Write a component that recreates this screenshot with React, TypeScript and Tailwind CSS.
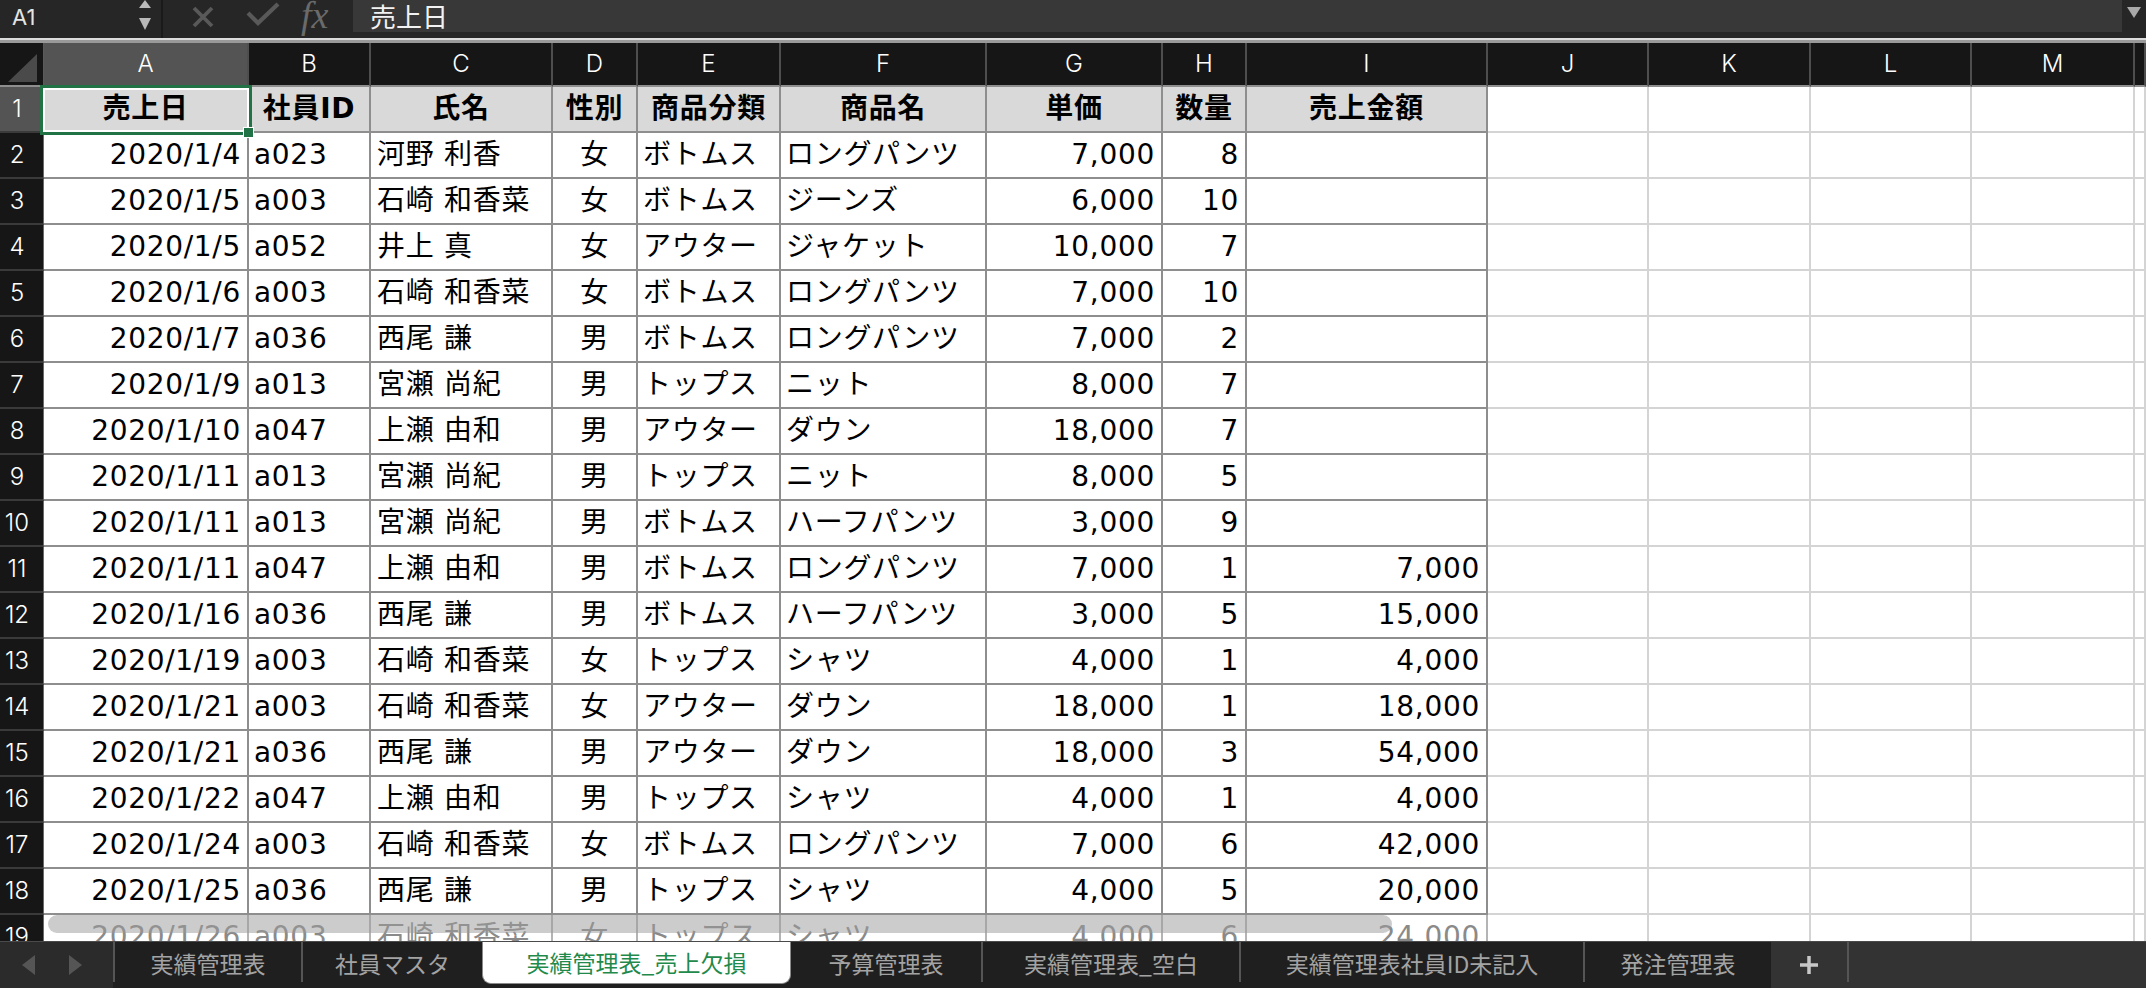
import React from "react";

const COLS =
  "grid grid-cols-[44px_205px_122px_182px_85px_143px_206px_176px_84px_241px_161px_162px_161px_163px_1fr]";

const LETTERS = ["A", "B", "C", "D", "E", "F", "G", "H", "I", "J", "K", "L", "M", ""];

const HEAD = ["売上日", "社員ID", "氏名", "性別", "商品分類", "商品名", "単価", "数量", "売上金額"];

const DATA: string[][] = [
  ["2020/1/4", "a023", "河野 利香", "女", "ボトムス", "ロングパンツ", "7,000", "8", ""],
  ["2020/1/5", "a003", "石崎 和香菜", "女", "ボトムス", "ジーンズ", "6,000", "10", ""],
  ["2020/1/5", "a052", "井上 真", "女", "アウター", "ジャケット", "10,000", "7", ""],
  ["2020/1/6", "a003", "石崎 和香菜", "女", "ボトムス", "ロングパンツ", "7,000", "10", ""],
  ["2020/1/7", "a036", "西尾 謙", "男", "ボトムス", "ロングパンツ", "7,000", "2", ""],
  ["2020/1/9", "a013", "宮瀬 尚紀", "男", "トップス", "ニット", "8,000", "7", ""],
  ["2020/1/10", "a047", "上瀬 由和", "男", "アウター", "ダウン", "18,000", "7", ""],
  ["2020/1/11", "a013", "宮瀬 尚紀", "男", "トップス", "ニット", "8,000", "5", ""],
  ["2020/1/11", "a013", "宮瀬 尚紀", "男", "ボトムス", "ハーフパンツ", "3,000", "9", ""],
  ["2020/1/11", "a047", "上瀬 由和", "男", "ボトムス", "ロングパンツ", "7,000", "1", "7,000"],
  ["2020/1/16", "a036", "西尾 謙", "男", "ボトムス", "ハーフパンツ", "3,000", "5", "15,000"],
  ["2020/1/19", "a003", "石崎 和香菜", "女", "トップス", "シャツ", "4,000", "1", "4,000"],
  ["2020/1/21", "a003", "石崎 和香菜", "女", "アウター", "ダウン", "18,000", "1", "18,000"],
  ["2020/1/21", "a036", "西尾 謙", "男", "アウター", "ダウン", "18,000", "3", "54,000"],
  ["2020/1/22", "a047", "上瀬 由和", "男", "トップス", "シャツ", "4,000", "1", "4,000"],
  ["2020/1/24", "a003", "石崎 和香菜", "女", "ボトムス", "ロングパンツ", "7,000", "6", "42,000"],
  ["2020/1/25", "a036", "西尾 謙", "男", "トップス", "シャツ", "4,000", "5", "20,000"],
  ["2020/1/26", "a003", "石崎 和香菜", "女", "トップス", "シャツ", "4,000", "6", "24,000"],
];

const ALIGN = [
  "justify-end pr-[6px]",
  "justify-start pl-[5px]",
  "justify-start pl-[6px]",
  "justify-center",
  "justify-start pl-[5px]",
  "justify-start pl-[5px]",
  "justify-end pr-[6px]",
  "justify-end pr-[6px]",
  "justify-end pr-[6px]",
];

const CELL_FONT =
  "font-['DejaVu_Sans','Noto_Sans_CJK_JP',sans-serif] text-[28px] leading-none tracking-[0.7px]";
const HEAD_FONT = "font-['Inter','Noto_Sans',sans-serif] font-light text-[24px] leading-none text-white";

function FormulaBar() {
  return (
    <div className="flex h-[38px] bg-[#262626]">
      <div className="flex w-[161px] items-start justify-between">
        <span className="pl-[12px] pt-[6px] font-['Inter','Noto_Sans',sans-serif] text-[22px] leading-none text-[#e4e4e4]">
          A1
        </span>
        <svg width="14" height="31" viewBox="0 0 14 31" className="mr-[9px]">
          <polygon points="1,8 13,8 7,0" fill="#b9b9b9" />
          <polygon points="1,18 13,18 7,30" fill="#b9b9b9" />
        </svg>
      </div>
      <div className="w-[2px] bg-[#1a1a1a]" />
      <div className="relative flex w-[190px] items-start">
        <svg width="24" height="24" viewBox="0 0 24 24" className="ml-[28px] mt-[5px]">
          <path d="M3 3 L21 21 M21 3 L3 21" stroke="#595959" strokeWidth="3.8" strokeLinecap="butt" />
        </svg>
        <svg width="36" height="26" viewBox="0 0 36 26" className="ml-[30px] mt-[1px]">
          <path d="M3 12 L13 22 L33 3" stroke="#595959" strokeWidth="4.2" fill="none" />
        </svg>
        <span className="ml-[20px] mt-[-5px] font-['Liberation_Serif',serif] text-[38px] italic leading-[40px] text-[#6a6a6a]">
          fx
        </span>
      </div>
      <div className="flex h-[32px] flex-1 items-center bg-[#383838] pl-[17px]">
        <span className="font-['Noto_Sans_CJK_JP',sans-serif] text-[26px] leading-[30px] text-[#f2f2f2]">売上日</span>
      </div>
      <div className="flex w-[24px] justify-center pt-[7px]">
        <svg width="14" height="12" viewBox="0 0 14 12">
          <polygon points="0,0 14,0 7,11" fill="#a9a9a9" />
        </svg>
      </div>
    </div>
  );
}

function ColumnHeader() {
  return (
    <div className={`${COLS} h-[44px] bg-[#161616]`}>
      <div className="relative border-r-[1px] border-b-2 border-r-[#5a5a5a] border-b-[#8e8e8e]">
        <svg width="44" height="42" viewBox="0 0 44 42" className="absolute left-0 top-0">
          <polygon points="8,39 37,39 37,11" fill="#4a4a4a" />
        </svg>
      </div>
      {LETTERS.map((l, i) => (
        <div
          key={i}
          className={`flex items-center justify-center border-r-2 border-b-2 border-r-[#4e4e4e] border-b-[#8e8e8e] ${HEAD_FONT} ${
            i === 0 ? "bg-[#545454]" : ""
          }`}
        >
          {l}
        </div>
      ))}
    </div>
  );
}

function RowHeaderCell({ n }: { n: number }) {
  return (
    <div
      className={`flex items-center justify-center pr-[9px] border-r-[1px] border-b-2 border-r-[#6a6a6a] border-b-[#3a3a3a] ${HEAD_FONT} ${
        n === 1 ? "bg-[#545454]" : "bg-[#161616]"
      }`}
    >
      {n}
    </div>
  );
}

function EmptyCells() {
  return (
    <>
      {[0, 1, 2, 3, 4].map((k) => (
        <div key={k} className="border-r-2 border-b-2 border-[#d4d4d4] bg-white" />
      ))}
    </>
  );
}

function HeaderRow() {
  return (
    <div className={`${COLS} h-[46px]`}>
      <RowHeaderCell n={1} />
      {HEAD.map((h, i) => (
        <div
          key={i}
          className={`flex items-center justify-center border-r-2 border-b-2 border-[#8e8e8e] bg-[#d9d9d9] font-bold text-black ${CELL_FONT}`}
        >
          {h}
        </div>
      ))}
      <EmptyCells />
    </div>
  );
}

function DataRow({ n, row, faded }: { n: number; row: string[]; faded?: boolean }) {
  return (
    <div className={`${COLS} h-[46px]`}>
      <RowHeaderCell n={n} />
      {row.map((c, i) => (
        <div
          key={i}
          className={`flex items-center whitespace-nowrap border-r-2 border-b-2 bg-white ${CELL_FONT} ${ALIGN[i]} ${
            faded ? "border-[#b4b4b4] text-[#8a8a8a]" : "border-[#8e8e8e] text-black"
          }`}
        >
          {c}
        </div>
      ))}
      <EmptyCells />
    </div>
  );
}

function Sheet() {
  return (
    <div className="relative h-[898px] overflow-hidden bg-white">
      <ColumnHeader />
      <HeaderRow />
      {DATA.map((r, i) => (
        <DataRow key={i} n={i + 2} row={r} faded={i === DATA.length - 1} />
      ))}
      {/* selection A1 */}
      <div className="absolute left-[40px] top-[42px] h-[50px] w-[212px] border-[3px] border-[#217346]">
        <div className="h-full w-full border-2 border-white" />
      </div>
      <div className="absolute left-[243px] top-[84px] h-[11px] w-[11px] border border-white bg-[#217346]" />
      {/* horizontal scrollbar */}
      <div className="absolute left-[48px] top-[872px] h-[18px] w-[1344px] rounded-full bg-[#9a9a9a]/50" />
    </div>
  );
}

const TAB_TEXT = "font-['Noto_Sans_CJK_JP',sans-serif] text-[23px] leading-none text-[#a3a3a3] whitespace-nowrap";

function Sep() {
  return <div className="h-[40px] w-[2px] self-start bg-[#555555]" />;
}

function Tab({ label, w }: { label: string; w: string }) {
  return (
    <div className={`flex h-full items-center justify-center pb-[3px] ${w}`}>
      <span className={TAB_TEXT}>{label}</span>
    </div>
  );
}

function TabBar() {
  return (
    <div className="flex h-[47px] border-t-[1px] border-[#4a4a4a] bg-[#1f1f1f]">
      <div className="flex h-full w-[113px] items-center bg-[#2b2b2b]">
        <svg width="14" height="20" viewBox="0 0 14 20" className="ml-[22px]">
          <polygon points="13,0 13,20 0,10" fill="#555555" />
        </svg>
        <svg width="14" height="20" viewBox="0 0 14 20" className="ml-[32px]">
          <polygon points="1,0 1,20 14,10" fill="#555555" />
        </svg>
      </div>
      <Sep />
      <Tab label="実績管理表" w="w-[186px]" />
      <Sep />
      <Tab label="社員マスタ" w="w-[179px]" />
      <div className="flex h-[42px] w-[309px] items-center justify-center rounded-b-[9px] border border-t-0 border-[#8a8a8a] bg-white">
        <span className="font-['Noto_Sans_CJK_JP',sans-serif] text-[23px] leading-none whitespace-nowrap text-[#1f8a4c]">
          実績管理表_売上欠損
        </span>
      </div>
      <Tab label="予算管理表" w="w-[190px]" />
      <Sep />
      <Tab label="実績管理表_空白" w="w-[256px]" />
      <Sep />
      <Tab label="実績管理表社員ID未記入" w="w-[342px]" />
      <Sep />
      <Tab label="発注管理表" w="w-[186px]" />
      <div className="flex h-full flex-1 bg-[#333333]">
        <div className="flex h-full w-[76px] items-center justify-center">
          <svg width="20" height="20" viewBox="0 0 20 20">
            <path d="M10 1 V19 M1 10 H19" stroke="#c8c8c8" strokeWidth="3.5" />
          </svg>
        </div>
        <Sep />
      </div>
    </div>
  );
}

export default function App() {
  return (
    <div className="flex h-[988px] w-[2146px] flex-col overflow-hidden bg-[#262626]">
      <FormulaBar />
      <div className="h-[5px] bg-[#262626]">
        <div className="h-[2px] bg-[#dcdcdc]" />
        <div className="h-[3px] bg-[#9a9a9a]" />
      </div>
      <Sheet />
      <TabBar />
    </div>
  );
}
